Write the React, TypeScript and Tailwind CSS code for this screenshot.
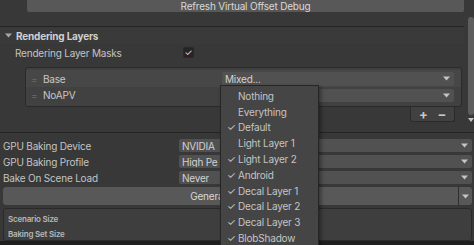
import React from "react";

const Arrow = () => (
  <svg width="7" height="5" viewBox="0 0 7 5" className="shrink-0">
    <path d="M0 0.5 H7 L3.5 4.5 Z" fill="#c4c4c4" />
  </svg>
);

const Check = ({ on }: { on: boolean }) => (
  <span className="w-[11px] text-[10px] leading-none text-[#c8c8c8]">{on ? "✓" : ""}</span>
);

const menu: [string, boolean][] = [
  ["Nothing", false],
  ["Everything", false],
  ["Default", true],
  ["Light Layer 1", false],
  ["Light Layer 2", true],
  ["Android", true],
  ["Decal Layer 1", true],
  ["Decal Layer 2", true],
  ["Decal Layer 3", true],
  ["BlobShadow", true],
];

function Field({ label, value }: { label: string; value: string }) {
  return (
    <div className="flex h-[15px] items-center">
      <div className="w-[179px] pl-[3px] text-[#c4c4c4]">{label}</div>
      <div className="flex h-[13px] flex-1 items-center justify-between rounded-[2px] bg-[#515151] pl-[3px] pr-[4px] text-[#d2d2d2]">
        <span className="max-w-[36px] overflow-hidden whitespace-nowrap">{value}</span>
        <Arrow />
      </div>
    </div>
  );
}

export default function App() {
  return (
    <div
      className="relative h-[245px] w-[474px] overflow-hidden bg-[#383838] text-[10px] leading-none tracking-[-0.2px]"
      style={{ fontFamily: "Inter, 'Noto Sans', sans-serif" }}
    >
      {/* top area with inner scrollbar */}
      <div className="flex">
        <div className="w-[464px]">
          <div className="ml-[27px] flex h-[12px] items-center justify-center rounded-b-[2px] bg-[#585858] text-[#d8d8d8]">
            Refresh Virtual Offset Debug
          </div>
          <div className="h-[14px]" />
          <div className="h-px bg-[#242424]" />
          <div className="flex h-[17px] items-center gap-[4px] bg-[#3a3a3a] pl-[5px] font-bold text-[#d0d0d0]">
            <svg width="7" height="5" viewBox="0 0 7 5">
              <path d="M0 0.5 H7 L3.5 4.5 Z" fill="#a8a8a8" />
            </svg>
            <span>Rendering Layers</span>
          </div>
          <div className="flex h-[17px] items-center pl-[15px] text-[#c4c4c4]">
            <div className="w-[168px]">Rendering Layer Masks</div>
            <div className="flex h-[11px] w-[11px] items-center justify-center rounded-[2px] border border-[#292929] bg-[#252525] text-[9px] text-[#e0e0e0]">
              ✓
            </div>
          </div>
          <div className="h-[6px]" />
          {/* list */}
          <div className="ml-[25px] mr-[2px] rounded-[3px] border border-[#2a2a2a] bg-[#414141] pb-[3px] pt-[2px]">
            <div className="flex h-[17px] items-center bg-[#474747] pl-[5px] pr-[7px] text-[#c8c8c8]">
              <span className="w-[12px] text-[#6a6a6a]">=</span>
              <span className="w-[179px]">Base</span>
              <div className="flex h-[14px] flex-1 items-center justify-between rounded-[2px] bg-[#515151] pl-[3px] pr-[4px] text-[#d2d2d2]">
                <span>Mixed...</span>
                <Arrow />
              </div>
            </div>
            <div className="flex h-[16px] items-center pl-[5px] pr-[7px] text-[#c8c8c8]">
              <span className="w-[12px] text-[#6a6a6a]">=</span>
              <span className="w-[179px]">NoAPV</span>
              <div className="flex h-[13px] flex-1 items-center justify-between rounded-[2px] bg-[#515151] pl-[3px] pr-[4px] text-[#d2d2d2]">
                <span></span>
                <Arrow />
              </div>
            </div>
          </div>
          <div className="flex justify-end pr-[9px]">
            <div className="flex h-[15px] w-[45px] items-center justify-center gap-[10px] rounded-b-[3px] border border-t-0 border-[#2a2a2a] bg-[#414141] text-[13px] font-bold text-[#c8c8c8]">
              <span>+</span>
              <span>−</span>
            </div>
          </div>
          <div className="h-[10px]" />
        </div>
        <div className="flex w-[10px] flex-col items-center">
          <div className="h-[17px]" />
          <div className="ml-[4px] h-[98px] w-[6px] rounded-[3px] bg-[#5e5e5e]" />
          <div className="ml-[4px] mt-[3px]">
            <svg width="6" height="4" viewBox="0 0 6 4">
              <path d="M0 0 H6 L3 4 Z" fill="#c4c4c4" />
            </svg>
          </div>
        </div>
      </div>
      <div className="h-px bg-[#242424]" />
      <div className="h-[5px]" />
      <div className="flex flex-col gap-[1px] pr-[2px]">
        <Field label="GPU Baking Device" value="NVIDIA" />
        <Field label="GPU Baking Profile" value="High Performance" />
        <Field label="Bake On Scene Load" value="Never" />
      </div>
      <div className="ml-[3px] mr-[2px] mt-[2px] flex h-[18px] items-center rounded-[3px] bg-[#585858] text-[#d8d8d8]">
        <div className="flex h-full flex-1 items-center justify-center">Generate Lighting</div>
        <div className="h-full w-px bg-[#2e2e2e]" />
        <div className="flex w-[13px] justify-center">
          <Arrow />
        </div>
      </div>
      <div className="ml-[3px] mr-[2px] mt-[3px] h-[33px] rounded-[3px] border border-[#2a2a2a] bg-[#3e3e3e] pl-[4px] pt-[6px] text-[8px] font-semibold text-[#b8b8b8]">
        <div className="h-[15px]">Scenario Size</div>
        <div>Baking Set Size</div>
      </div>
      <div className="absolute bottom-0 left-0 h-[4px] w-full bg-[#1f1f1f]" />

      {/* popup menu */}
      <div className="absolute left-[220px] top-[85px] w-[99px] border border-[#262626] bg-[#454545] pt-[2px] shadow-[2px_2px_4px_rgba(0,0,0,0.4)]">
        {menu.map(([name, on]) => (
          <div key={name} className="flex h-[15.8px] items-center pl-[6px] text-[#c4c4c4]">
            <Check on={on} />
            <span>{name}</span>
          </div>
        ))}
      </div>
    </div>
  );
}
